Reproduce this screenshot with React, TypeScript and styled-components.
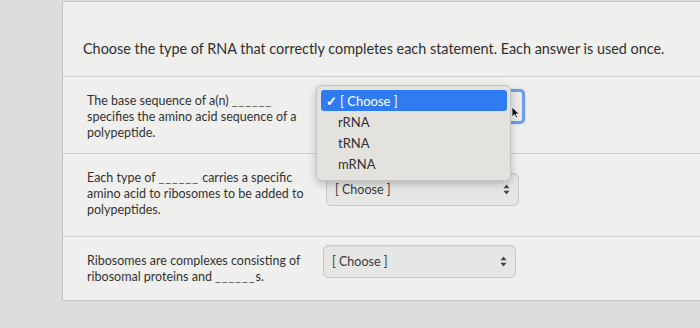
import React from 'react';
import styled, { createGlobalStyle } from 'styled-components';

const GlobalStyle = createGlobalStyle`
  html, body {
    margin: 0;
    padding: 0;
    background: #dedddb;
    font-family: Lato, "Open Sans", "Liberation Sans", sans-serif;
    color: #353535;
  }
`;

const Page = styled.div`
  width: 700px;
  height: 328px;
  overflow: hidden;
  padding-left: 62px;
  box-sizing: border-box;
`;

const Card = styled.div`
  margin-top: 1px;
  height: 300px;
  box-sizing: border-box;
  background: #efefed;
  border: 1px solid #c4c4c2;
  border-right: none;
  display: flex;
  flex-direction: column;
`;

const Header = styled.div`
  padding: 37px 0 17px 20px;
  border-bottom: 1px solid #cfcfcd;
`;

const Title = styled.h1`
  margin: 0;
  font-size: 14.4px;
  font-weight: 400;
  line-height: 20px;
  color: #2f2f2f;
`;

const Row = styled.div<{ $height: number; $last?: boolean }>`
  height: ${p => p.$height}px;
  box-sizing: border-box;
  display: grid;
  grid-template-columns: 234px 215px;
  align-items: start;
  padding: 8px 0 0 24px;
  border-bottom: ${p => (p.$last ? 'none' : '1px solid #cfcfcd')};
`;

const Statement = styled.p`
  margin: 0;
  padding-top: 8px;
  font-size: 12.5px;
  line-height: 16px;
  color: #333;
`;

const Blank = styled.span`
  letter-spacing: 1px;
  color: #555;
`;

const SelectWrap = styled.div<{ $shift: number; $top: number }>`
  position: relative;
  margin-left: ${p => p.$shift}px;
  margin-top: ${p => p.$top}px;
`;

const SelectBox = styled.div<{ $focused?: boolean }>`
  width: ${p => (p.$focused ? 204 : 193)}px;
  height: ${p => (p.$focused ? 35 : 33)}px;
  box-sizing: border-box;
  display: flex;
  align-items: center;
  justify-content: space-between;
  padding: 0 8px;
  border-radius: 5px;
  background: ${p => (p.$focused ? '#eaeaea' : '#e6e6e4')};
  border: ${p => (p.$focused ? '3px solid #6d9fe2' : '1px solid #c9c9c7')};
  box-shadow: ${p => (p.$focused ? '0 0 2px #9bbdf0' : 'inset 0 1px 1px rgba(0,0,0,0.06)')};
  font-size: 12.5px;
  color: #3a3a3a;
`;

const Menu = styled.ul`
  position: absolute;
  left: -5px;
  top: -4px;
  width: 195px;
  margin: 0;
  padding: 4px 3px 6px 4px;
  list-style: none;
  box-sizing: border-box;
  background: #e3e2df;
  border: 1px solid #c7c6c3;
  border-radius: 6px;
  box-shadow: 0 3px 8px rgba(0, 0, 0, 0.22);
  z-index: 2;
`;

const Option = styled.li<{ $active?: boolean }>`
  height: 21px;
  display: flex;
  align-items: center;
  padding-left: ${p => (p.$active ? '5px' : '17px')};
  border-radius: 3px;
  font-size: 13px;
  background: ${p => (p.$active ? '#2f7cf2' : 'transparent')};
  color: ${p => (p.$active ? '#fff' : '#2f2f2f')};
`;

const Check = styled.span`
  width: 14px;
  font-size: 13px;
  font-weight: 700;
`;

const Cursor = styled.svg`
  position: absolute;
  left: 190px;
  top: 17px;
`;

const Arrows = () => (
  <svg width="7" height="11" viewBox="0 0 7 11">
    <path d="M3.5 0.5 L6.5 4.3 L0.5 4.3 Z" fill="#444" />
    <path d="M3.5 10.5 L6.5 6.7 L0.5 6.7 Z" fill="#444" />
  </svg>
);

const options = ['rRNA', 'tRNA', 'mRNA'];

export default function App() {
  return (
    <>
      <GlobalStyle />
      <Page>
        <Card>
          <Header>
            <Title>Choose the type of RNA that correctly completes each statement. Each answer is used once.</Title>
          </Header>

          <Row $height={78}>
            <Statement>
              The base sequence of a(n) <Blank>______</Blank> specifies the amino acid sequence of a polypeptide.
            </Statement>
            <SelectWrap $shift={0} $top={4}>
              <SelectBox $focused>
                <span />
              </SelectBox>
              <Cursor width="9" height="13" viewBox="0 0 9 13">
                <path d="M1 1 L1 11 L3.4 8.6 L5 12 L6.6 11.3 L5 8 L8.3 8 Z" fill="#111" stroke="#fff" strokeWidth="0.8" />
              </Cursor>
              <Menu>
                <Option $active><Check>✓</Check>[ Choose ]</Option>
                {options.map(o => (
                  <Option key={o}>{o}</Option>
                ))}
              </Menu>
            </SelectWrap>
          </Row>

          <Row $height={83}>
            <Statement>
              Each type of <Blank>______</Blank> carries a specific amino acid to ribosomes to be added to polypeptides.
            </Statement>
            <SelectWrap $shift={5} $top={11}>
              <SelectBox>
                [ Choose ]
                <Arrows />
              </SelectBox>
            </SelectWrap>
          </Row>

          <Row $height={64} $last>
            <Statement>
              Ribosomes are complexes consisting of ribosomal proteins and <Blank>______</Blank>s.
            </Statement>
            <SelectWrap $shift={2} $top={0}>
              <SelectBox>
                [ Choose ]
                <Arrows />
              </SelectBox>
            </SelectWrap>
          </Row>
        </Card>
      </Page>
    </>
  );
}
